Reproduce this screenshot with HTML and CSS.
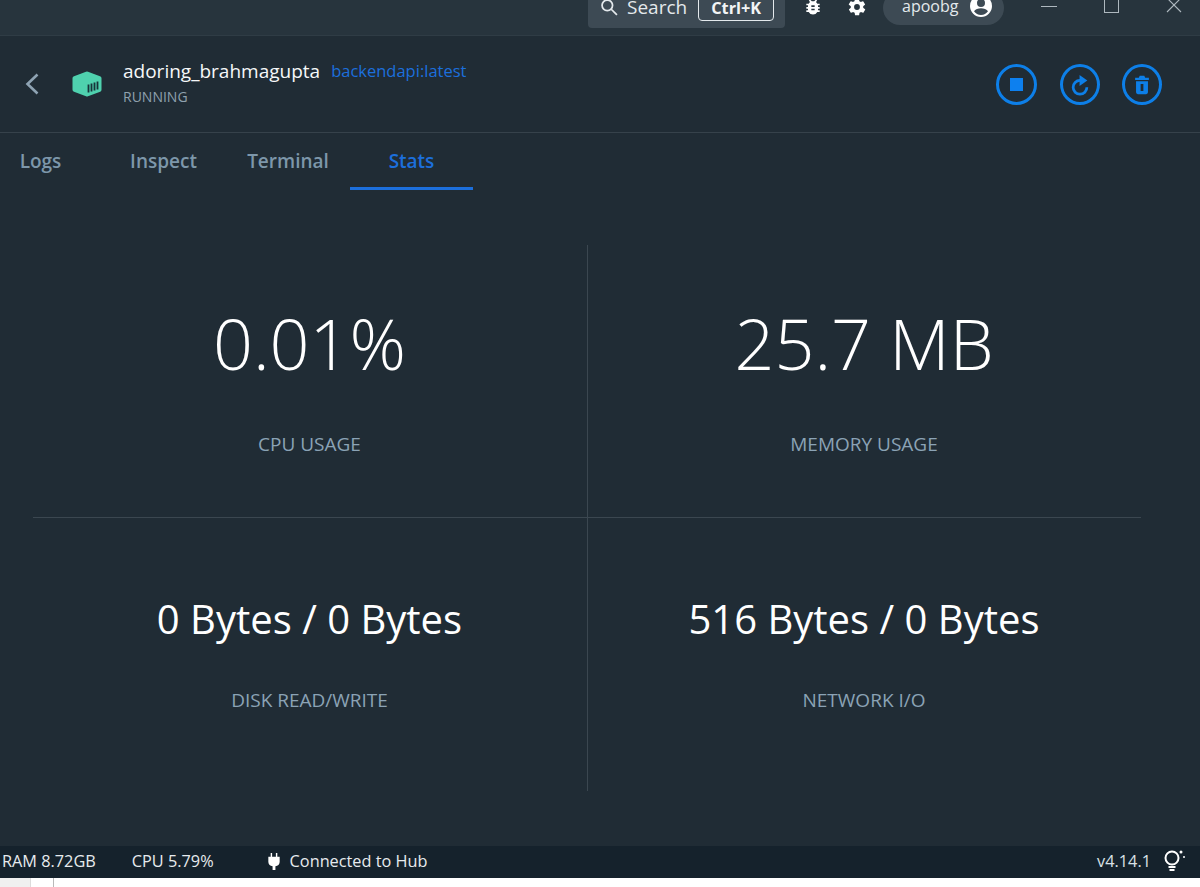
FILE: index.html
```html
<!DOCTYPE html>
<html lang="en">
<head>
<meta charset="utf-8">
<title>adoring_brahmagupta</title>
<link rel="stylesheet" href="styles.css">
</head>
<body>
<div class="app">
  <header class="titlebar">
    <div class="search">
      <svg class="search-icon" viewBox="0 0 24 24"><circle cx="9.5" cy="9.5" r="6" fill="none" stroke="currentColor" stroke-width="2"/><path d="M14 14l6.5 6.5" stroke="currentColor" stroke-width="2" fill="none"/></svg>
      <span class="search-text">Search</span>
      <span class="kbd">Ctrl+K</span>
    </div>
    <svg class="tool-icon bug" viewBox="0 0 24 24"><path fill="currentColor" d="M20 8h-2.800a6 6 0 0 0-1.800-2l1.600-1.600L15.600 3l-2.200 2.200a6 6 0 0 0-2.800 0L8.400 3 7 4.400 8.600 6a6 6 0 0 0-1.800 2H4v2h2.100A6 6 0 0 0 6 11v1H4v2h2v1c0 .3 0 .7.100 1H4v2h2.800a6 6 0 0 0 10.400 0H20v-2h-2.100c.1-.3.100-.7.100-1v-1h2v-2h-2v-1c0-.3 0-.7-.1-1H20V8zm-6 8h-4v-2h4v2zm0-4h-4v-2h4v2z"/></svg>
    <svg class="tool-icon gear" viewBox="0 0 24 24"><path fill="currentColor" d="M19.400 13a7.500 7.500 0 0 0 0-2l2.100-1.600a.5.5 0 0 0 .1-.6l-2-3.500a.5.5 0 0 0-.6-.2l-2.500 1a7.300 7.300 0 0 0-1.700-1l-.4-2.600a.5.5 0 0 0-.5-.4h-4a.5.5 0 0 0-.5.4l-.4 2.600a7.300 7.300 0 0 0-1.700 1l-2.500-1a.5.5 0 0 0-.6.2l-2 3.500a.5.5 0 0 0 .1.600L4.600 11a7.500 7.500 0 0 0 0 2l-2.100 1.600a.5.5 0 0 0-.1.600l2 3.500a.5.5 0 0 0 .6.2l2.500-1a7.300 7.300 0 0 0 1.700 1l.4 2.600a.5.5 0 0 0 .5.4h4a.5.5 0 0 0 .5-.4l.4-2.600a7.300 7.300 0 0 0 1.700-1l2.500 1a.5.5 0 0 0 .6-.2l2-3.500a.5.5 0 0 0-.1-.6L19.400 13zM12 15.500a3.500 3.500 0 1 1 0-7 3.500 3.500 0 0 1 0 7z"/></svg>
    <div class="user">
      <span class="user-name">apoobg</span>
      <svg class="avatar" viewBox="0 0 24 24"><path fill="currentColor" d="M12 1a11 11 0 1 0 0 22 11 11 0 0 0 0-22zm0 4a4 4 0 1 1 0 8 4 4 0 0 1 0-8zm0 16a8.500 8.500 0 0 1-7-3.700c1-2 4.500-3 7-3s6 1 7 3a8.500 8.500 0 0 1-7 3.700z"/></svg>
    </div>
    <div class="window-controls">
      <span class="win-min"></span>
      <span class="win-max"></span>
      <svg class="win-close" viewBox="0 0 16 16"><path d="M1 1l14 14M15 1L1 15" stroke="currentColor" stroke-width="1.100" fill="none"/></svg>
    </div>
  </header>

  <section class="container-head">
    <svg class="back" viewBox="0 0 16 24"><path d="M13.500 2.500L3.500 12l10 9.500" fill="none" stroke="currentColor" stroke-width="2.600"/></svg>
    <svg class="whale" viewBox="0 0 30 26"><path fill="#4fd1ae" d="M14 .8a3 3 0 0 1 2 0l12 4.500a2 2 0 0 1 1.500 2v11.500a2 2 0 0 1-1.300 1.900L16 25.200a3 3 0 0 1-2 0L2 20.700a2 2 0 0 1-1.500-1.900V7.300a2 2 0 0 1 1.500-2z"/><path stroke="#17343a" stroke-width="1.800" d="M16.500 13.500v8M19.500 12.500v8M22.500 11.500v8M25.500 10.500v8"/></svg>
    <div class="names">
      <div class="name-row">
        <span class="name">adoring_brahmagupta</span>
        <span class="image">backendapi:latest</span>
      </div>
      <div class="status">RUNNING</div>
    </div>
    <div class="actions">
      <button class="action action-stop"><span class="stop"></span></button>
      <button class="action"><svg class="action-icon" viewBox="0 0 24 24"><path d="M12 7a7.500 7.500 0 1 0 7.500 7.500" fill="none" stroke="currentColor" stroke-width="3"/><path d="M11.500 1L20 7l-8.500 6z" fill="currentColor"/></svg></button>
      <button class="action"><svg class="action-icon" viewBox="0 0 24 24"><path fill="currentColor" d="M9.500 2h5l1 2h4v2.500H4.500V4h4zM5.500 8h13v12a2 2 0 0 1-2 2h-9a2 2 0 0 1-2-2zm5 3v7.500h3V11z"/></svg></button>
    </div>
  </section>

  <nav class="tabs">
    <a class="tab tab-logs">Logs</a>
    <a class="tab tab-inspect">Inspect</a>
    <a class="tab tab-terminal">Terminal</a>
    <a class="tab tab-stats active">Stats</a>
  </nav>

  <main class="stats">
    <div class="stats-grid">
      <div class="stat cell-tl"><div class="value big">0.01%</div><div class="label">CPU USAGE</div></div>
      <div class="stat cell-tr"><div class="value big">25.7 MB</div><div class="label">MEMORY USAGE</div></div>
      <div class="stat cell-bl"><div class="value">0 Bytes / 0 Bytes</div><div class="label">DISK READ/WRITE</div></div>
      <div class="stat cell-br"><div class="value">516 Bytes / 0 Bytes</div><div class="label">NETWORK I/O</div></div>
    </div>
  </main>

  <footer class="statusbar">
    <span class="ram">RAM 8.72GB</span>
    <span class="cpu">CPU 5.79%</span>
    <svg class="plug" viewBox="0 0 12 18"><path fill="currentColor" d="M2.500 0h1.500v4h4V0h1.500v4H12v5.500a5 5 0 0 1-4.500 4.500V18h-3v-4A5 5 0 0 1 0 9.500V4h2.500z"/></svg>
    <span class="hub">Connected to Hub</span>
    <span class="version">v4.14.1</span>
    <svg class="bulb" viewBox="0 0 24 24"><circle cx="10" cy="9" r="6.500" fill="none" stroke="currentColor" stroke-width="2"/><path d="M6.500 18h7M7.500 21h5" stroke="currentColor" stroke-width="2" fill="none"/><circle cx="19" cy="3" r="1.500" fill="currentColor"/><circle cx="22" cy="8" r="1" fill="currentColor"/></svg>
  </footer>
  <div class="below">
    <span class="below-a"></span>
    <span class="below-b"></span>
  </div>
</div>
</body>
</html>
```

FILE: styles.css
```css
* { box-sizing: border-box; }
html, body { margin: 0; padding: 0; }
body { font-family: "Open Sans", "Noto Sans", sans-serif; background: #202c35; overflow: hidden; }
.app { width: 1200px; height: 887px; display: flex; flex-direction: column; overflow: hidden; background: #202c35; }

.titlebar { height: 36px; flex: none; display: flex; align-items: flex-end; padding: 0 0 7px 588px; background: #27343d; border-bottom: 1px solid #2f3c45; overflow: hidden; }
.search { width: 197px; height: 40px; flex: none; display: flex; align-items: center; padding: 0 0 0 11px; background: #3d4a54; border-radius: 4px; color: #e4e9ec; }
.search-icon { width: 21px; height: 21px; margin-top: -2px; flex: none; }
.search-text { margin-left: 7px; font-size: 19px; line-height: 24px; margin-top: -3px; }
.kbd { margin-left: 11px; margin-top: -7px; width: 76px; height: 33px; display: flex; align-items: flex-end; justify-content: center; padding-bottom: 2px; border: 1px solid #e4e9ec; border-radius: 4px; font-size: 16.300px; line-height: 20px; font-weight: 700; color: #f2f4f6; }
.tool-icon { width: 20px; height: 20px; flex: none; color: #fff; margin-bottom: 11px; }
.bug { margin-left: 18px; }
.gear { margin-left: 24px; }
.user { width: 121px; height: 34px; margin-left: 16px; margin-bottom: 3px; flex: none; display: flex; align-items: center; padding: 0 0 4px 19px; background: #3d4a54; border-radius: 17px; color: #e4e9ec; font-size: 16px; }
.user-name { line-height: 20px; }
.avatar { width: 24px; height: 24px; margin-left: 11px; color: #fff; flex: none; }
.window-controls { margin-left: 37px; margin-bottom: 10px; display: flex; align-items: center; height: 20px; color: #aeb8bf; }
.win-min { width: 16px; height: 1px; background: #aeb8bf; margin-bottom: 3px; }
.win-max { width: 15px; height: 22px; margin-left: 47px; border: 1px solid #aeb8bf; margin-top: -12px; }
.win-close { width: 16px; height: 16px; margin-left: 47px; margin-top: -6px; }

.container-head { height: 97px; flex: none; display: flex; align-items: center; padding: 0 38px 0 24px; border-bottom: 1px solid #36424b; }
.back { width: 16px; height: 24px; color: #8ea3b3; flex: none; }
.whale { width: 30px; height: 26px; margin-left: 32px; flex: none; }
.names { margin-left: 21px; margin-top: -4px; }
.name-row { display: flex; align-items: center; }
.name { font-size: 19px; line-height: 26px; color: #f6f8f9; }
.image { margin-left: 11px; font-size: 16.500px; line-height: 26px; color: #1c6fdc; }
.status { margin-top: 4px; font-size: 14px; line-height: 18px; color: #8fa1ae; }
.actions { margin-left: auto; display: flex; gap: 22.500px; margin-top: 1px; }
.action { width: 40px; height: 41px; padding: 0; display: flex; align-items: center; justify-content: center; background: none; border: 3px solid #0d7fe8; border-radius: 50%; color: #0d7fe8; }
.action-stop { width: 41px; }
.stop { width: 13px; height: 13px; background: #0d80ef; display: block; }
.action-icon { width: 22px; height: 22px; }

.tabs { height: 57px; flex: none; display: flex; align-items: stretch; }
.tab { display: flex; align-items: center; justify-content: center; padding-bottom: 2px; font-size: 19px; font-weight: 600; color: #7d97aa; }
.tab-logs { margin-left: 20px; width: 41px; }
.tab-inspect { margin-left: 69px; width: 67px; }
.tab-terminal { margin-left: 50px; width: 82px; }
.tab-stats { margin-left: 21px; width: 123px; }
.active { color: #1c6fdc; padding: 2px 0 0; border-bottom: 3px solid #1c6fdc; }

.stats { flex: 1; min-height: 0; padding: 55px 59px 0 33px; }
.stats-grid { display: grid; grid-template-columns: 554px 554px; grid-template-rows: 273px 273px; }
.stat { display: flex; flex-direction: column; align-items: center; }
.cell-tl { border-right: 1px solid #3b4750; border-bottom: 1px solid #3b4750; width: 555px; padding-right: 1px; }
.cell-bl { border-right: 1px solid #3b4750; width: 555px; padding-right: 1px; }
.cell-tr { border-bottom: 1px solid #3b4750; }
.value { margin-top: 76px; height: 50px; font-size: 40px; line-height: 50px; color: #fff; white-space: nowrap; }
.big { margin-top: 49px; height: 98px; font-size: 70px; line-height: 98px; font-weight: 300; }
.label { margin-top: 44px; font-size: 19px; line-height: 24px; color: #8ba3b5; }
.big + .label { margin-top: 40px; }

.statusbar { height: 32px; flex: none; display: flex; align-items: center; padding: 0 14px 2px 0; background: #15222c; color: #e7ebee; font-size: 16.300px; }
.ram { margin-left: 2px; }
.cpu { margin-left: 36px; }
.plug { width: 12px; height: 17px; margin-left: 54px; color: #fff; flex: none; }
.hub { margin-left: 10px; }
.version { margin-left: auto; color: #d9e1e6; }
.bulb { width: 24px; height: 24px; margin-left: 11px; color: #fff; flex: none; }

.below { height: 9px; flex: none; display: flex; background: #fff; }
.below-a { width: 31px; background: #f0f0f0; border-right: 1px solid #dcdcdc; }
.below-b { width: 23px; border-right: 1px solid #b9b9b9; }
```
